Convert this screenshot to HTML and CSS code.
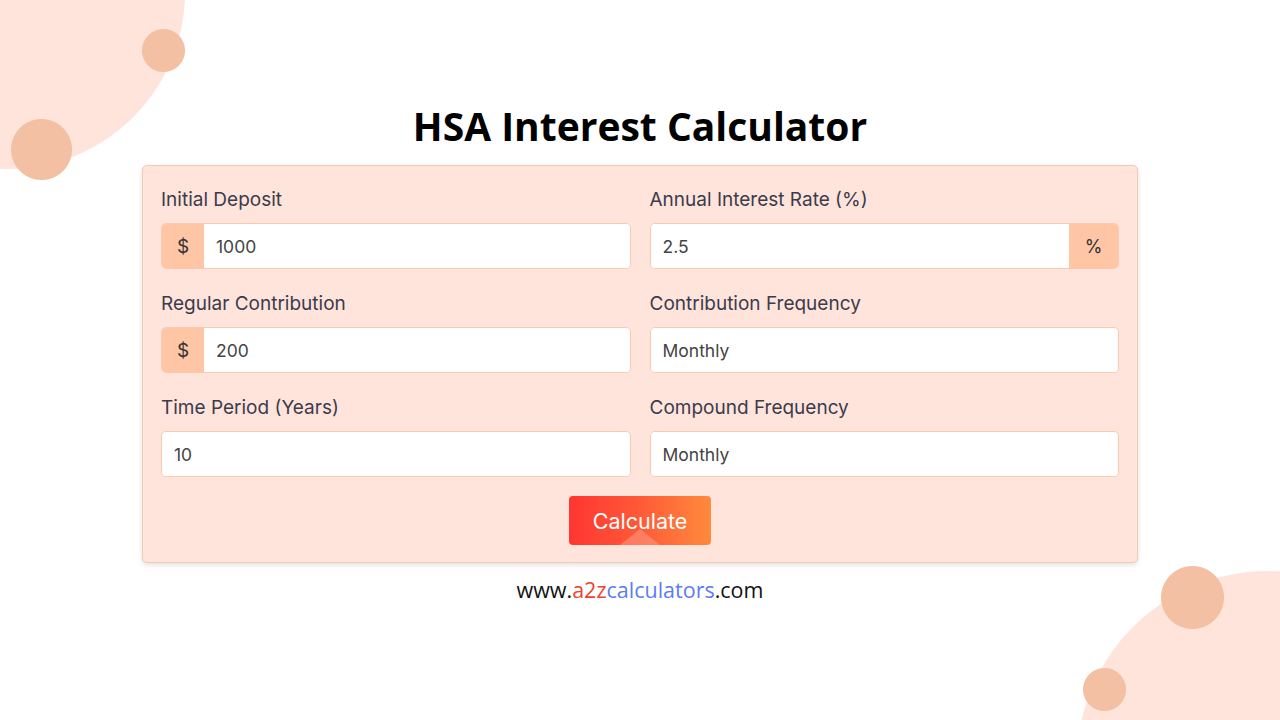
FILE: index.html
```html
<!DOCTYPE html>
<html lang="en">
<head>
<meta charset="utf-8">
<title>HSA Interest Calculator</title>
<link rel="stylesheet" href="styles.css">
</head>
<body>
<div class="backdrop"></div>

<main class="page">
  <h1 class="title">HSA Interest Calculator</h1>
  <section class="card">
    <div class="grid">
      <div class="field">
        <label class="label">Initial Deposit</label>
        <div class="group">
          <span class="addon addon-left">$</span>
          <input class="input" type="text" value="1000">
        </div>
      </div>
      <div class="field">
        <label class="label">Annual Interest Rate (%)</label>
        <div class="group">
          <input class="input" type="text" value="2.5">
          <span class="addon addon-right">%</span>
        </div>
      </div>
      <div class="field">
        <label class="label">Regular Contribution</label>
        <div class="group">
          <span class="addon addon-left">$</span>
          <input class="input" type="text" value="200">
        </div>
      </div>
      <div class="field">
        <label class="label">Contribution Frequency</label>
        <div class="group">
          <div class="input select">Monthly</div>
        </div>
      </div>
      <div class="field">
        <label class="label">Time Period (Years)</label>
        <div class="group">
          <input class="input" type="text" value="10">
        </div>
      </div>
      <div class="field">
        <label class="label">Compound Frequency</label>
        <div class="group">
          <div class="input select">Monthly</div>
        </div>
      </div>
    </div>
    <div class="actions">
      <button class="btn" type="button">Calculate</button>
    </div>
  </section>
  <p class="site">www.<span class="red">a2z</span><span class="blue">calculators</span>.com</p>
</main>
</body>
</html>
```
FILE: styles.css
```css
* { box-sizing: border-box; }
html, body { margin: 0; padding: 0; }
body {
  width: 1280px;
  height: 720px;
  overflow: hidden;
  background: #ffffff;
  position: relative;
  font-family: Inter, "Noto Sans", sans-serif;
}
.backdrop {
  position: absolute;
  left: 0;
  top: 0;
  width: 1280px;
  height: 720px;
  background:
    radial-gradient(circle at 163.5px 50.5px, #f4c0a4 21px, rgba(244,192,164,0) 22px),
    radial-gradient(circle at 41.5px 149.5px, #f4c0a4 30px, rgba(244,192,164,0) 31px),
    radial-gradient(circle at 1192.5px 597.5px, #f4c0a4 31px, rgba(244,192,164,0) 32px),
    radial-gradient(circle at 1104.5px 689.5px, #f4c0a4 21px, rgba(244,192,164,0) 22px),
    radial-gradient(circle at 8px -8px, #fee4da 176.5px, rgba(254,228,218,0) 177.5px),
    radial-gradient(circle at 1268px 762px, #fee4da 190.5px, rgba(254,228,218,0) 191.5px),
    #ffffff;
}

.page {
  position: relative;
  z-index: 1;
  display: flex;
  flex-direction: column;
  align-items: center;
  padding-top: 101px;
}
.title {
  margin: 0;
  font-family: "Open Sans", "Noto Sans", sans-serif;
  font-weight: 700;
  font-size: 39px;
  line-height: 50px;
  color: #000;
}
.card {
  margin-top: 14px;
  width: 996px;
  background: #ffe4dc;
  border: 1px solid #f8c8b3;
  border-radius: 5px;
  box-shadow: 0 2px 5px rgba(0,0,0,0.12);
  padding: 22px 18px 17px;
}
.grid {
  display: grid;
  grid-template-columns: 1fr 1fr;
  column-gap: 19px;
  row-gap: 23px;
}
.field { display: flex; flex-direction: column; }
.label {
  font-size: 19px;
  line-height: 24px;
  color: #3b3b4a;
  margin-bottom: 11px;
}
.group {
  display: flex;
  height: 46px;
  border: 1px solid #fbc8b1;
  border-radius: 5px;
  overflow: hidden;
  background: #fff;
}
.addon {
  display: flex;
  align-items: center;
  justify-content: center;
  background: #ffc6a5;
  color: #333;
  font-size: 19px;
}
.addon-left { width: 42px; }
.addon-right { width: 49px; font-size: 18px; }
.input {
  flex: 1;
  min-width: 0;
  border: 0;
  outline: none;
  background: #fff;
  padding: 0 12px;
  font-family: Inter, "Noto Sans", sans-serif;
  font-size: 17.5px;
  color: #444;
  height: 100%;
}
.select { display: flex; align-items: center; }
.actions {
  display: flex;
  justify-content: center;
  margin-top: 19px;
}
.btn {
  position: relative;
  overflow: hidden;
  width: 142px;
  height: 49px;
  border: 0;
  border-radius: 4px;
  background: linear-gradient(90deg, #ff3630 0%, #ff5a38 50%, #ff8a3c 100%);
  color: #fff;
  font-family: Inter, "Noto Sans", sans-serif;
  font-size: 21.5px;
  padding: 0;
}
.btn::after {
  content: "";
  position: absolute;
  left: 51px;
  bottom: 0;
  border-left: 20px solid transparent;
  border-right: 20px solid transparent;
  border-bottom: 16px solid rgba(255,160,140,0.5);
}
.site {
  margin: 15px 0 0;
  font-family: "Open Sans", "Noto Sans", sans-serif;
  font-size: 21.5px;
  line-height: 24px;
  color: #111;
}
.red { color: #f0412f; }
.blue { color: #5c7cf2; }
```
